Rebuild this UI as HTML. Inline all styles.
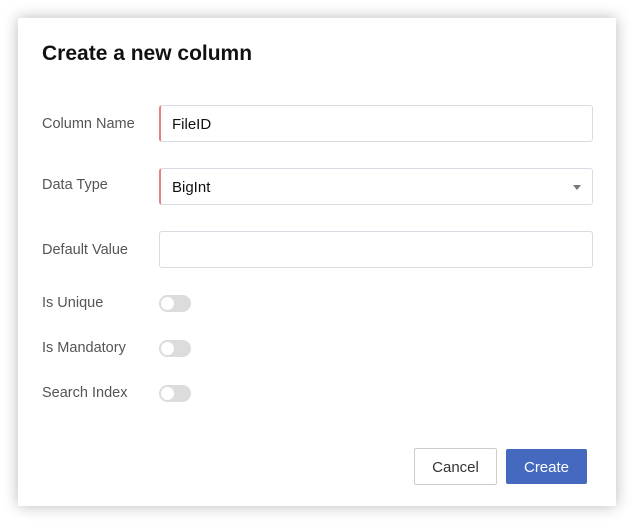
<!DOCTYPE html>
<html><head><style>
body{margin:0;width:634px;height:525px;background:#fff;font-family:"Liberation Sans",sans-serif;position:relative;overflow:hidden}
.dlg{position:absolute;left:18px;top:18px;width:598px;height:488px;background:#fff;box-shadow:0 0 14px rgba(0,0,0,.28)}
.t{position:absolute;left:42px;top:42px;font-size:21px;font-weight:bold;color:#111}
.l{position:absolute;left:42px;font-size:14.5px;color:#555}
.in{position:absolute;left:159px;width:434px;height:37px;border:1px solid #d8dbe2;border-radius:3px;box-sizing:border-box;font-size:15px;color:#111;padding-left:11px;line-height:37px}
.req{border-left:2px solid #e87f7f}
.tg{position:absolute;left:159px;width:32px;height:17px;border-radius:9px;background:#dcdcdc}
.tg:after{content:"";position:absolute;left:2px;top:2px;width:13px;height:13px;border-radius:50%;background:#fff}
.b{position:absolute;height:37px;box-sizing:border-box;font-size:15px;text-align:center;line-height:37px;border-radius:2px}
</style></head><body>
<div class="dlg"></div>
<div class="t">Create a new column</div>
<div class="l" style="top:116px">Column Name</div>
<div class="in req" style="top:105px">FileID</div>
<div class="l" style="top:177px">Data Type</div>
<div class="in req" style="top:168px">BigInt<span style="position:absolute;right:11px;top:16px;width:0;height:0;border-left:4px solid transparent;border-right:4px solid transparent;border-top:5px solid #777"></span></div>
<div class="l" style="top:242px">Default Value</div>
<div class="in" style="top:231px"></div>
<div class="l" style="top:295px">Is Unique</div>
<div class="tg" style="top:295px"></div>
<div class="l" style="top:340px">Is Mandatory</div>
<div class="tg" style="top:340px"></div>
<div class="l" style="top:385px">Search Index</div>
<div class="tg" style="top:385px"></div>
<div class="b" style="left:414px;top:448px;width:83px;border:1px solid #ccc;color:#333">Cancel</div>
<div class="b" style="left:506px;top:449px;width:81px;height:35px;background:#4469bf;color:#fff;line-height:37px">Create</div>
</body></html>
